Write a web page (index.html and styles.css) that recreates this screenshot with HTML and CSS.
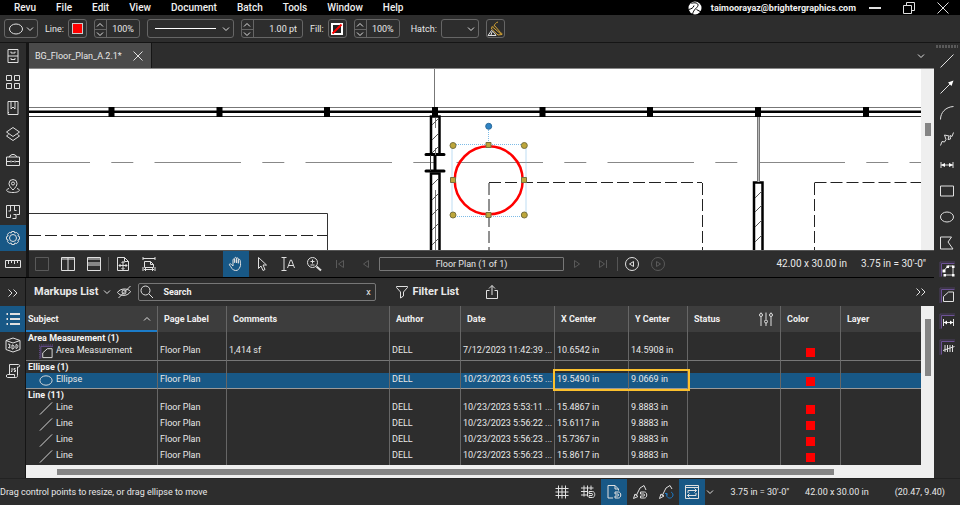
FILE: index.html
```
<!DOCTYPE html>
<html lang="en">
<head>
    <meta charset="UTF-8">
    <meta name="viewport" content="width=device-width, initial-scale=1.0">
    <title>BG_Floor_Plan_A.2.1 - Revu</title>
    <link rel="stylesheet" href="styles.css">
</head>
<body>
    <svg class="sprite" aria-hidden="true">
        <symbol id="chevron" viewBox="0 0 8 8"><path d="M1 2.500l3 3 3-3"/></symbol>
        <symbol id="chevron-up" viewBox="0 0 8 8"><path d="M1 5.500l3-3 3 3"/></symbol>
        <symbol id="double" viewBox="0 0 16 16"><path d="M3.500 4.500L7 8l-3.500 3.500M8.500 4.500L12 8l-3.500 3.500"/></symbol>
        <symbol id="line" viewBox="0 0 16 16"><path d="M1.500 14.500l13-13"/></symbol>
        <symbol id="ellipse" viewBox="0 0 16 16"><ellipse cx="8" cy="8" rx="6.500" ry="5"/></symbol>
        <symbol id="ruler" viewBox="0 0 16 16"><path class="ruler" d="M2.500 15.500v-13h13"/><path class="ruler ticks" d="M1 15.500V1h14.500"/></symbol>
        <symbol id="area" viewBox="0 0 16 16"><path d="M4.500 14.500v-5l5-4.500h5v9.500z"/></symbol>
    </svg>

    <header class="menubar">
        <nav class="menu">
            <a href="#">Revu</a>
            <a href="#">File</a>
            <a href="#">Edit</a>
            <a href="#">View</a>
            <a href="#">Document</a>
            <a href="#">Batch</a>
            <a href="#">Tools</a>
            <a href="#">Window</a>
            <a href="#">Help</a>
        </nav>
        <div class="account">
            <svg class="logo" viewBox="0 0 14 14"><circle cx="7" cy="7" r="6.500"/><path d="M3.500 2.500C6.500 1 10.500 2 10 4.500S5.500 8 4.500 13.500M6 4.500C5.500 7 3 8 .5 8.500M8.500 8.500l4.500 2.500"/></svg>
            <a href="#">taimoorayaz@brightergraphics.com</a>
        </div>
        <div class="window-buttons">
            <button aria-label="Minimize"><svg class="icon" viewBox="0 0 16 16"><path class="heavy" d="M2 8h12"/></svg></button>
            <button aria-label="Restore"><svg class="icon" viewBox="0 0 16 16"><path d="M2.500 5.500h8v8h-8zM5.500 5.500v-3h8v8h-3"/></svg></button>
            <button aria-label="Close"><svg class="icon" viewBox="0 0 16 16"><path d="M2.500 2.500l11 11M13.500 2.500l-11 11"/></svg></button>
        </div>
    </header>

    <div class="properties">
        <div class="picker shape">
            <select aria-label="Shape"><option></option></select>
            <svg class="icon" viewBox="0 0 16 16"><use href="#ellipse"/></svg>
            <svg class="chevron"><use href="#chevron"/></svg>
        </div>
        <label for="lineColor">Line:</label>
        <button class="swatch" id="lineColor"><span class="red"></span></button>
        <div class="spinner">
            <div class="steps">
                <button aria-label="More"><svg class="chevron"><use href="#chevron-up"/></svg></button>
                <button aria-label="Less"><svg class="chevron"><use href="#chevron"/></svg></button>
            </div>
            <input type="text" aria-label="Line opacity" value="100%">
        </div>
        <div class="picker line-style">
            <select aria-label="Line style"><option></option></select>
            <span class="stroke"></span>
            <svg class="chevron"><use href="#chevron"/></svg>
        </div>
        <div class="spinner wide">
            <div class="steps">
                <button aria-label="More"><svg class="chevron"><use href="#chevron-up"/></svg></button>
                <button aria-label="Less"><svg class="chevron"><use href="#chevron"/></svg></button>
            </div>
            <input type="text" aria-label="Line width" value="1.00 pt">
        </div>
        <label for="fillColor">Fill:</label>
        <button class="swatch" id="fillColor"><svg viewBox="0 0 12 12"><path class="frame" d="M1 1h10v10H1z"/><path class="slash" d="M1.500 10.500l9-9"/></svg></button>
        <div class="spinner">
            <div class="steps">
                <button aria-label="More"><svg class="chevron"><use href="#chevron-up"/></svg></button>
                <button aria-label="Less"><svg class="chevron"><use href="#chevron"/></svg></button>
            </div>
            <input type="text" aria-label="Fill opacity" value="100%">
        </div>
        <label class="hatch-label" for="hatch">Hatch:</label>
        <div class="picker hatch">
            <select id="hatch"><option></option></select>
            <svg class="chevron"><use href="#chevron"/></svg>
        </div>
        <button class="swatch" aria-label="Format painter"><svg class="icon" viewBox="0 0 16 16"><path class="gold" d="M11 1C9 1.500 7.500 3 7 5.500M5 5.500l9.500 8M7.500 4.500l6 7 2 1.500M5 5.500l-.5 2.500 6.500 6 4-.5"/><path d="M4.500 9.500l-3.500 5h8l-2-3zM4 14l1-3"/></svg></button>
    </div>

    <div class="workspace">
        <main class="center">
            <div class="upper">
                <nav class="rail">
                    <button aria-label="File access"><svg class="icon" viewBox="0 0 16 16"><path d="M3 1.500h10v13H3zM3 8h10M6 3.500V5h4V3.500M6 10v1.500h4V10"/></svg></button>
                    <button aria-label="Thumbnails"><svg class="icon" viewBox="0 0 16 16"><path d="M1.500 1.500h5v5h-5zM9.500 1.500h5v5h-5zM1.500 9.500h5v5h-5zM9.500 9.500h5v5h-5z"/></svg></button>
                    <button aria-label="Bookmarks"><svg class="icon" viewBox="0 0 16 16"><path d="M3 1.500h10v13H3zM6 1.500v7.500l2-2 2 2V1.500M3 12.500h1"/></svg></button>
                    <button aria-label="Layers"><svg class="icon" viewBox="0 0 16 16"><path d="M8 1.500L14.500 6 8 10.500 1.500 6zM3.500 8.500l-2 1.500L8 14.500l6.500-4.500-2-1.500"/></svg></button>
                    <button aria-label="Tool chest"><svg class="icon" viewBox="0 0 16 16"><path d="M1.500 5h13v8.500h-13zM1.500 9.500h4m1.500 0h2m1.500 0h4M4.500 5V4L7 2.500h2L11.500 4v1M6 8.500v2m4-2v2"/></svg></button>
                    <button aria-label="Places"><svg class="icon" viewBox="0 0 16 16"><path d="M8 12C5.500 9.500 4 7.500 4 5.500a4 4 0 0 1 8 0C12 7.500 10.500 9.500 8 12zM4 10.500c-4 1-3 4 4 4s8-3 4-4"/><circle cx="8" cy="5.500" r="1.500"/></svg></button>
                    <button aria-label="Spaces"><svg class="icon" viewBox="0 0 16 16"><path d="M1.500 1.500h13v9h-3M1.500 1.500v12h4v-3M7.500 14.500H11v-4H8.500M5.500 1.500V7h-2M9.500 1.500v5h2"/></svg></button>
                    <button class="active" aria-label="Properties"><svg class="icon" viewBox="0 0 16 16"><circle cx="8" cy="8" r="3.500"/><path d="M6.700 1.500h2.600l.5 1.500 1.800-.6 1.900 1.900-.6 1.700 1.600.7v2.600l-1.600.7.6 1.700-1.900 1.900-1.800-.6-.5 1.500H6.700L6.200 13l-1.800.6-1.900-1.900.6-1.700-1.600-.7V6.700L3.100 6l-.6-1.700 1.900-1.900 1.800.6z"/></svg></button>
                    <button aria-label="Measurements"><svg class="icon" viewBox="0 0 16 16"><path d="M.5 4.500h15v7H.5zM3.500 4.500V8m3-3.500v2.500m3-2.500V8m3-3.500v2.500"/></svg></button>
                </nav>
                <section class="document">
                    <div class="tabs">
                        <div class="tab">
                            <span>BG_Floor_Plan_A.2.1*</span>
                            <button aria-label="Close tab"><svg class="icon" viewBox="0 0 16 16"><path d="M3.500 3.500l9 9M12.500 3.500l-9 9"/></svg></button>
                        </div>
                        <button aria-label="All tabs"><svg class="chevron"><use href="#chevron"/></svg></button>
                    </div>
                    <div class="sheet">
                        <svg class="plan" viewBox="29 69 892 181" preserveAspectRatio="xMinYMin slice">
                            <!-- outer wall -->
                            <path class="thin" d="M434.500 69v38M29 107.500h892"/>
                            <path class="wall" d="M29 111.700h892"/>
                            <path class="dark" d="M29 116.500h892"/>
                            <path class="solid" d="M108.500 107h6v10h-6zM216.500 107h6v10h-6zM324 107h6v10h-6zM432 107h6v10h-6zM539.500 107h6v10h-6zM647 107h6v10h-6zM755 107h6v10h-6zM863 107h6v10h-6z"/>
                            <path class="axis" d="M3.500 162.500h918"/>
                            <!-- left room -->
                            <path class="dark" d="M29 213.500h298.500V250"/>
                            <path class="hidden-line" d="M29 235.500h298"/>
                            <!-- columns -->
                            <path class="column" d="M431 154v-37.500h8.500V154M431 251v-77.500h8.500V251M754 251v-68.500h8.500V251"/>
                            <path class="beam" d="M426 154.500h18M426 171h18"/>
                            <path class="web" d="M435 155v16"/>
                            <path class="dark" d="M430.500 155v16"/>
                            <path class="thin" d="M435.500 118v10m0 20v7m0 35v60M757.500 117v65M759.500 117v65"/>
                            <path class="fill-line" d="M758.500 117v65"/>
                            <path class="hatching" d="M432 125l6-6M432 140l6-6M432 153l6-6M432 185l6-6M432 200l6-6M432 215l6-6M432 230l6-6M432 245l6-6M755 198l7-7M755 212l7-7M755 227l7-7M755 242l7-7"/>
                            <path class="hidden-line" d="M489 182.500h213M489 183v67M702.500 183v67M814.500 182.500H921M814.500 183v67"/>
                            <!-- selected ellipse with its handles -->
                            <path class="bounds" d="M452 144.500h74v72h-74zM488.500 130v14"/>
                            <circle class="markup" cx="488.700" cy="180.300" r="34"/>
                            <path class="handle" d="M486 142.500h5v5h-5zM450.500 177.500h5v5h-5zM521.500 177.500h5v5h-5zM486 212.500h5v5h-5z"/>
                            <circle class="handle" cx="453" cy="145.500" r="3"/>
                            <circle class="handle" cx="524.300" cy="145.500" r="3"/>
                            <circle class="handle" cx="453" cy="215" r="3"/>
                            <circle class="handle" cx="524.300" cy="215" r="3"/>
                            <circle class="rotate" cx="488.700" cy="126.300" r="3"/>
                        </svg>
                        <div class="vscroll"><div class="thumb"></div></div>
                    </div>
                    <div class="navbar">
                        <button class="dim" aria-label="Unsplit"><svg class="icon" viewBox="0 0 16 16"><path d="M1.500 1.500h13v13h-13z"/></svg></button>
                        <button aria-label="Split vertical"><svg class="icon" viewBox="0 0 16 16"><path d="M1.500 1.500h13v13h-13zM8 1.500v13M1.500 3h13"/></svg></button>
                        <button aria-label="Split horizontal"><svg class="icon" viewBox="0 0 16 16"><path d="M1.500 1.500h13v13h-13zM1.500 7h13M1.500 9h13M1.500 3h13"/></svg></button>
                        <span class="sep"></span>
                        <button aria-label="Fit page"><svg class="icon" viewBox="0 0 16 16"><path d="M2.500 1.500h7l4 4v9h-11zM9.500 1.500v4h4M8 5.500v8M4 9.500h8M6.500 7L8 5.500 9.500 7M6.500 12L8 13.500 9.500 12M5.500 8L4 9.500 5.500 11M10.500 8L12 9.500 10.500 11"/></svg></button>
                        <button aria-label="Fit width"><svg class="icon" viewBox="0 0 16 16"><path d="M2 1v3M14 1v3M2 2.500h12M3.500 5.500h6l3 3v3h-9zM9.500 5.500v3h3M2 11v4M14 11v4M3 13.500h10M5 12l-1.500 1.500L5 15M11 12l1.500 1.500L11 15"/></svg></button>
                        <button class="active pan" aria-label="Pan"><svg class="icon" viewBox="0 0 16 16"><path d="M5 10V4c0-1.500 1.700-1.500 1.700 0v3M6.700 6V2.500c0-1.500 1.800-1.500 1.800 0V7M8.500 6V3c0-1.500 1.800-1.500 1.800 0v4.500M10.300 7V4.500c0-1.500 1.900-1.500 1.900 0 0 2 1 4.500-.2 6.500s-1.500 3.500-4.500 3.500C4 14.500 3.500 11 1.500 9c-.5-1.500 1-1.500 2-.5L5 10"/></svg></button>
                        <button aria-label="Select"><svg class="icon" viewBox="0 0 16 16"><path d="M4.500 1.500v11l2.500-2.500 2 4.500 2-1-2-4.500h3.500z"/></svg></button>
                        <button aria-label="Select text"><svg class="icon" viewBox="0 0 16 16"><path d="M1.500 1.500h5M4 1.500v13M1.500 14.500h5M7.500 12l3-8h1l3 8M8.500 9.500h5"/></svg></button>
                        <button aria-label="Zoom"><svg class="icon" viewBox="0 0 16 16"><circle cx="6.500" cy="6.500" r="5"/><path class="heavy" d="M10.500 10.500l4.500 4"/><path d="M4.500 5.500h4M6.500 3.500v4M4.500 9h4"/></svg></button>
                        <button class="dim" aria-label="First page"><svg class="icon" viewBox="0 0 16 16"><path d="M4.500 4v8M11.500 4.500v7L6.500 8z"/></svg></button>
                        <button class="dim" aria-label="Previous page"><svg class="icon" viewBox="0 0 16 16"><path d="M10.500 4.500v7L5.500 8z"/></svg></button>
                        <input class="page" type="text" aria-label="Page" value="Floor Plan (1 of 1)">
                        <button class="dim" aria-label="Next page"><svg class="icon" viewBox="0 0 16 16"><path d="M5.500 4.500v7l5-3.500z"/></svg></button>
                        <button class="dim" aria-label="Last page"><svg class="icon" viewBox="0 0 16 16"><path d="M11.500 4v8M4.500 4.500v7l5-3.500z"/></svg></button>
                        <span class="sep"></span>
                        <button aria-label="Previous view"><svg class="icon" viewBox="0 0 16 16"><circle cx="8" cy="8" r="6.500"/><path d="M9.500 5.500v5L5.500 8z"/></svg></button>
                        <button class="dim" aria-label="Next view"><svg class="icon" viewBox="0 0 16 16"><circle cx="8" cy="8" r="6.500"/><path d="M6.500 5.500v5l4-2.500z"/></svg></button>
                        <div class="sizes">
                            <span>42.00 x 30.00 in</span>
                            <span>3.75 in = 30'-0"</span>
                        </div>
                    </div>
                </section>
            </div>

            <div class="lower">
                <nav class="rail">
                    <button aria-label="Collapse"><svg class="icon" viewBox="0 0 16 16"><use href="#double"/></svg></button>
                    <button class="active" aria-label="Markups"><svg class="icon" viewBox="0 0 16 16"><path class="heavy" d="M5 3h10M5 8h10M5 13h10M1.500 3H3M1.500 8H3M1.500 13H3"/></svg></button>
                    <button aria-label="3D model tree"><svg class="icon" viewBox="0 0 16 16"><path d="M8 1l7 2.500v9L8 15l-7-2.500v-9zM1 3.500L8 6l7-2.500M3 7l2 .5v1L4 9l1 .5v1.500l-2-.5M7 8v4h1c1.500-.5 1.500-3.500 0-4zM11 7.500v4c2 0 3-4 0-4z"/></svg></button>
                    <button aria-label="JavaScript"><svg class="icon" viewBox="0 0 16 16"><path d="M4.500 11V1.500h9c1.500 0 1.500 2.500 0 2.500h-1v8.500c0 2-1 2-2 2h-8c-1.500 0-1.500-3 0-3h7v1.500c0 1 .5 1.500 1 1.500M7 5v3.500H6M10.500 5.500H9V7h1.500v1.500H9"/></svg></button>
                </nav>
                <section class="panel">
                    <div class="panel-bar">
                        <button class="panel-title">Markups List <svg class="chevron"><use href="#chevron"/></svg></button>
                        <button aria-label="Hide markups"><svg class="icon" viewBox="0 0 16 16"><path d="M1.500 8.500C4 4 12 4 14.500 7.500 12 12.500 4 12.500 1.500 8.500zM2.500 14l12-12"/><circle cx="8" cy="8" r="2"/></svg></button>
                        <div class="search">
                            <svg class="icon" viewBox="0 0 16 16"><circle cx="6.500" cy="6.500" r="4.500"/><path d="M10 10l4 4"/></svg>
                            <input type="text" aria-label="Search" placeholder="Search">
                            <button aria-label="Clear">x</button>
                        </div>
                        <button class="filter"><svg class="icon" viewBox="0 0 16 16"><path d="M2.500 2.500h11v1L9.500 8v4l-3 2V8l-4-4.500z"/></svg>Filter List</button>
                        <button aria-label="Export"><svg class="icon" viewBox="0 0 16 16"><path d="M5.500 6.500h-3v8h11v-8h-3M8 11V1.500M5 4.500l3-3 3 3"/></svg></button>
                        <button class="more" aria-label="More"><svg class="icon" viewBox="0 0 16 16"><use href="#double"/></svg></button>
                    </div>
                    <div class="list">
                        <div class="table-wrap">
                            <table>
                                <colgroup>
                                    <col class="c-subject"><col class="c-page"><col class="c-comments"><col class="c-author"><col class="c-date">
                                    <col class="c-x"><col class="c-y"><col class="c-status"><col class="c-color"><col>
                                </colgroup>
                                <thead>
                                    <tr>
                                        <th class="sorted"><div class="th">Subject <svg class="chevron"><use href="#chevron-up"/></svg></div></th>
                                        <th>Page Label</th>
                                        <th>Comments</th>
                                        <th>Author</th>
                                        <th>Date</th>
                                        <th>X Center</th>
                                        <th>Y Center</th>
                                        <th><div class="th">Status <svg class="icon" viewBox="0 0 16 16"><path d="M3 1.500v1M3 6v9M8 1.500v7M8 12v3M13 1.500v1M13 6v9"/><circle cx="3" cy="4" r="1.500"/><circle cx="8" cy="10.500" r="1.500"/><circle cx="13" cy="4" r="1.500"/></svg></div></th>
                                        <th>Color</th>
                                        <th>Layer</th>
                                    </tr>
                                </thead>
                                <tbody>
                                    <tr class="group"><td>Area Measurement (1)</td><td></td><td></td><td></td><td></td><td></td><td></td><td></td><td></td><td></td></tr>
                                    <tr class="last">
                                        <td><div class="subject"><svg class="icon" viewBox="0 0 16 16"><use href="#ruler"/><use href="#area"/></svg>Area Measurement</div></td>
                                        <td>Floor Plan</td><td>1,414 sf</td><td>DELL</td><td>7/12/2023 11:42:39 ...</td><td>10.6542 in</td><td>14.5908 in</td><td></td><td><span class="red"></span></td><td></td>
                                    </tr>
                                    <tr class="group"><td>Ellipse (1)</td><td></td><td></td><td></td><td></td><td></td><td></td><td></td><td></td><td></td></tr>
                                    <tr class="selected">
                                        <td><div class="subject"><svg class="icon" viewBox="0 0 16 16"><use href="#ellipse"/></svg>Ellipse</div></td>
                                        <td>Floor Plan</td><td></td><td>DELL</td><td>10/23/2023 6:05:55 ...</td><td class="marked">19.5490 in<span class="callout"></span></td><td>9.0669 in</td><td></td><td><span class="red"></span></td><td></td>
                                    </tr>
                                    <tr class="group"><td>Line (11)</td><td></td><td></td><td></td><td></td><td></td><td></td><td></td><td></td><td></td></tr>
                                    <tr>
                                        <td><div class="subject"><svg class="icon" viewBox="0 0 16 16"><use href="#line"/></svg>Line</div></td>
                                        <td>Floor Plan</td><td></td><td>DELL</td><td>10/23/2023 5:53:11 ...</td><td>15.4867 in</td><td>9.8883 in</td><td></td><td><span class="red"></span></td><td></td>
                                    </tr>
                                    <tr>
                                        <td><div class="subject"><svg class="icon" viewBox="0 0 16 16"><use href="#line"/></svg>Line</div></td>
                                        <td>Floor Plan</td><td></td><td>DELL</td><td>10/23/2023 5:56:22 ...</td><td>15.6117 in</td><td>9.8883 in</td><td></td><td><span class="red"></span></td><td></td>
                                    </tr>
                                    <tr>
                                        <td><div class="subject"><svg class="icon" viewBox="0 0 16 16"><use href="#line"/></svg>Line</div></td>
                                        <td>Floor Plan</td><td></td><td>DELL</td><td>10/23/2023 5:56:23 ...</td><td>15.7367 in</td><td>9.8883 in</td><td></td><td><span class="red"></span></td><td></td>
                                    </tr>
                                    <tr>
                                        <td><div class="subject"><svg class="icon" viewBox="0 0 16 16"><use href="#line"/></svg>Line</div></td>
                                        <td>Floor Plan</td><td></td><td>DELL</td><td>10/23/2023 5:56:23 ...</td><td>15.8617 in</td><td>9.8883 in</td><td></td><td><span class="red"></span></td><td></td>
                                    </tr>
                                </tbody>
                            </table>
                        </div>
                        <div class="vscroll"><div class="thumb"></div></div>
                    </div>
                    <div class="hscroll"><div class="thumb"></div></div>
                </section>
            </div>
        </main>

        <aside class="tools">
            <div class="grip"></div>
            <button aria-label="Line"><svg class="icon" viewBox="0 0 16 16"><use href="#line"/></svg></button>
            <button aria-label="Arrow"><svg class="icon" viewBox="0 0 16 16"><path d="M1.500 14.500L11 5"/><path class="fill" d="M14.500 1.500l-2 5.500L9 3.500z"/></svg></button>
            <button aria-label="Arc"><svg class="icon" viewBox="0 0 16 16"><path d="M1.500 14.500c0-7 5-12.500 13-13"/></svg></button>
            <button aria-label="Polyline"><svg class="icon" viewBox="0 0 16 16"><path d="M1.500 14.500L3 10.500l2.500.5L7 8.500 5.500 4l4.500 1-1 3.500 2.500-.5-.5-3.500 2 1 1.500-4"/></svg></button>
            <button aria-label="Dimension"><svg class="icon" viewBox="0 0 16 16"><path d="M2 5v6M14 5v6M2 8h12"/><path class="fill" d="M2 8l4-2v4zM14 8l-4-2v4z"/></svg></button>
            <button aria-label="Rectangle"><svg class="icon" viewBox="0 0 16 16"><path d="M1.500 3h13v10h-13z"/></svg></button>
            <button aria-label="Ellipse"><svg class="icon" viewBox="0 0 16 16"><use href="#ellipse"/></svg></button>
            <button aria-label="Polygon"><svg class="icon" viewBox="0 0 16 16"><path d="M1.500 2h11L9 7l5 7H1.500z"/></svg></button>
            <button aria-label="Polylength"><svg class="icon" viewBox="0 0 16 16"><use href="#ruler"/><path d="M5 9.500L9 5h5v9H6"/><path class="fill" d="M3.500 8.500h3v3h-3zM7.500 4.500h2.500v2.500H7.500zM13 4.500h2.500v2.500H13zM13 13h2.500v2.500H13zM4.500 13H7v2.500H4.500z"/></svg></button>
            <button aria-label="Area"><svg class="icon" viewBox="0 0 16 16"><use href="#ruler"/><use href="#area"/></svg></button>
            <button aria-label="Length"><svg class="icon" viewBox="0 0 16 16"><use href="#ruler"/><path d="M4.500 6v7M14.500 6v7M5 9.500h9"/><path class="fill" d="M5 9.500l3-2v4zM14 9.500l-3-2v4z"/></svg></button>
            <button aria-label="Count"><svg class="icon" viewBox="0 0 16 16"><use href="#ruler"/><path d="M6 6v7M8.500 6v7M11 6v7M13.500 6v7M4 11.500l11.500-4"/></svg></button>
        </aside>
    </div>

    <footer class="statusbar">
        <span>Drag control points to resize, or drag ellipse to move</span>
        <div class="snaps">
            <button aria-label="Grid"><svg class="icon" viewBox="0 0 16 16"><path d="M4.500 1.500v13M8 1.500v13M11.500 1.500v13M1.500 4.500h13M1.500 8h13M1.500 11.500h13"/></svg></button>
            <button aria-label="Snap to grid"><svg class="icon" viewBox="0 0 16 16"><path d="M4 1.500v11M7.500 1.500v11M11 1.500V6M1 4h12.500M1 7.500h7M1 11h6M9 7.500h3.500c3 0 3 6 0 6H9v-2h3c.8 0 .8-2 0-2H9z"/></svg></button>
            <button class="active" aria-label="Snap to content"><svg class="icon" viewBox="0 0 16 16"><path d="M7 14H2V1.500h7L12.500 5v1.500M9 1.500V5h3M9 8h3.500c3 0 3 6 0 6H9v-2h3c.8 0 .8-2 0-2H9z"/></svg></button>
            <button aria-label="Snap to markup"><svg class="icon" viewBox="0 0 16 16"><path d="M4 12l4-8 4-2.500L14 6M3 10l-1.500 4.500 4.500-2zM8.500 8h4c3 0 3 6 0 6h-4v-2H12c.8 0 .8-2 0-2H8.500z"/></svg></button>
            <button aria-label="Reuse"><svg class="icon" viewBox="0 0 16 16"><path d="M4 12l4-8 4-2.500L14 5M3 10l-1.500 4.500L6 12z"/><path class="blue" d="M9 9.500c-2 5 5.500 6.500 6 1.500M13 8c1 .5 2 1.500 2 3M9 9.500H7M9 9.500v2"/></svg></button>
            <button class="active" aria-label="Sync"><svg class="icon" viewBox="0 0 16 16"><path d="M1.500 1.500h13v13h-13zM1.500 3.500h13M4 9V6.500h8.500M10.500 4.500l2 2-2 2M12 9v2.500H3.500M5.500 9.500l-2 2 2 2"/></svg></button>
            <button class="small" aria-label="Sync options"><svg class="chevron"><use href="#chevron"/></svg></button>
        </div>
        <span class="scale">3.75 in = 30'-0"</span>
        <span class="size">42.00 x 30.00 in</span>
        <span>(20.47, 9.40)</span>
    </footer>
</body>
</html>
```

FILE: styles.css
```
* {
    box-sizing: border-box;
}
body {
    display: flex;
    flex-direction: column;
    height: 100vh;
    margin: 0;
    overflow: hidden;
    background-color: #2d2d2d;
    color: #e8e8e8;
    font-family: Roboto, sans-serif;
    font-size: 9px;
    line-height: 12px;
}
button,
input,
select {
    margin: 0;
    padding: 0;
    border: none;
    border-radius: 0;
    background: none;
    color: inherit;
    font: inherit;
    outline: none;
}
button {
    display: flex;
    flex: none;
    align-items: center;
    justify-content: center;
    width: 26px;
    height: 26px;
}
a {
    color: inherit;
    text-decoration: none;
}
svg {
    display: block;
    flex: none;
    fill: none;
    stroke: #e0e0e0;
    stroke-width: 1;
}
.sprite {
    position: absolute;
    width: 0;
    height: 0;
}
.icon {
    width: 16px;
    height: 16px;
}
.chevron {
    width: 8px;
    height: 8px;
}
.heavy {
    stroke-width: 2;
}
.fill {
    fill: #fff;
    stroke: none;
}
.ruler {
    stroke: #6d5296;
}
.ticks {
    stroke-dasharray: 1 1;
}
.gold {
    stroke: #d3a233;
}
.blue {
    stroke: #1c7cc9;
}
.active {
    background-color: #185886;
}
.dim svg {
    stroke: #5a5a5a;
}
.red {
    display: block;
    width: 9px;
    height: 9px;
    background-color: #f00;
}

/* menu */
.menubar {
    display: flex;
    flex: none;
    align-items: center;
    height: 15px;
    padding-left: 14px;
    background-color: #000;
    color: #f0f0f0;
}
.menu {
    display: flex;
    gap: 20px;
    font-size: 10px;
    font-weight: 500;
}
.account {
    display: flex;
    align-items: center;
    gap: 9px;
    margin-left: auto;
    font-weight: 700;
}
.logo {
    width: 14px;
    height: 14px;
    fill: #fff;
    stroke: none;
}
.logo path {
    fill: none;
    stroke: #000;
    stroke-width: 1;
}
.window-buttons {
    display: flex;
    gap: 8px;
    margin-left: 6px;
    padding-right: 4px;
}
.window-buttons button {
    height: 15px;
}

/* markup properties */
.properties {
    display: flex;
    flex: none;
    align-items: center;
    gap: 7px;
    height: 28px;
    padding-left: 4px;
    border-bottom: 1px solid #151515;
}
.properties label {
    margin-right: -3px;
}
.properties .hatch-label {
    margin-left: 4px;
}
.picker,
.swatch,
.spinner {
    display: flex;
    flex: none;
    align-items: center;
    height: 19px;
    border: 1px solid #666;
    border-radius: 3px;
}
.picker {
    position: relative;
    justify-content: space-between;
    padding: 0 3px;
}
.picker select {
    position: absolute;
    inset: 0;
    width: 100%;
    appearance: none;
}
.shape {
    width: 34px;
}
.line-style {
    width: 87px;
    padding-left: 7px;
}
.stroke {
    width: 61px;
    height: 1px;
    background-color: #fff;
}
.hatch {
    justify-content: flex-end;
    width: 38px;
}
.swatch {
    width: 19px;
}
.swatch .red {
    width: 11px;
    height: 11px;
    border: 1px solid #ccc;
}
.swatch svg {
    width: 12px;
    height: 12px;
}
.swatch .icon {
    width: 16px;
    height: 16px;
}
.frame {
    fill: #222;
    stroke: #fff;
    stroke-width: 2;
}
.slash {
    stroke: #f00;
    stroke-width: 2;
}
.spinner {
    width: 46px;
}
.wide {
    width: 62px;
}
.steps {
    flex: none;
    width: 12px;
    border-right: 1px solid #666;
}
.steps button {
    width: 11px;
    height: 9px;
}
.steps button + button {
    height: 8px;
    border-top: 1px solid #666;
}
.spinner input {
    width: 100%;
    min-width: 0;
    padding-right: 5px;
    text-align: right;
}

/* layout */
.workspace {
    display: flex;
    flex: 1;
    min-height: 0;
}
.center {
    display: flex;
    flex: 1;
    flex-direction: column;
    min-width: 0;
}
.upper {
    display: flex;
    flex: 1;
    min-height: 0;
    border-bottom: 1px solid #000;
}
.lower {
    display: flex;
    flex: none;
}
.rail {
    flex: none;
    width: 26px;
    overflow: hidden;
    border-right: 1px solid #151515;
}
.upper .rail {
    width: 29px;
    border-right: 3px solid #151515;
}
.lower .rail {
    padding-top: 2px;
}
.document,
.panel {
    display: flex;
    flex: 1;
    flex-direction: column;
    min-width: 0;
}
.tabs {
    display: flex;
    flex: none;
    justify-content: space-between;
    height: 26px;
    border-bottom: 1px solid #888;
}
.tab {
    display: flex;
    align-items: center;
    gap: 3px;
    padding-left: 6px;
    border-right: 1px solid #151515;
    background-color: #4a4a4a;
}
.sheet {
    display: flex;
    flex: 1;
    min-height: 0;
}
.vscroll {
    flex: none;
    width: 13px;
    background-color: #efefef;
}
.vscroll .thumb {
    width: 6px;
    height: 13px;
    margin: 54px auto 0;
    background-color: #858585;
}

/* floor plan */
.plan {
    flex: 1;
    min-width: 0;
    height: 100%;
    background-color: #fff;
    stroke: #000;
}
.thin {
    stroke: #777;
}
.dark {
    stroke: #333;
}
.wall,
.column {
    stroke-width: 2.500;
}
.solid {
    fill: #000;
    stroke: none;
}
.axis {
    stroke: #888;
    stroke-dasharray: 86.500 21.300 22 21.200;
}
.hidden-line {
    stroke: #222;
    stroke-dasharray: 12 4;
}
.beam {
    stroke-width: 3;
    stroke-linecap: round;
}
.web {
    stroke-width: 3;
}
.fill-line {
    stroke: #bbb;
}
.hatching {
    stroke: #555;
}
.bounds {
    stroke: #7dbbe6;
    stroke-dasharray: 1 1;
}
.markup {
    stroke: #f00;
    stroke-width: 2.500;
}
.handle {
    fill: #bda63a;
    stroke: #77713f;
}
.rotate {
    fill: #2f83c4;
    stroke: #2a6a9b;
}

/* page navigation */
.navbar {
    display: flex;
    flex: none;
    align-items: center;
    height: 27px;
    border-top: 1px solid #555;
}
.sep {
    flex: none;
    width: 1px;
    height: 14px;
    margin: 0 1px;
    background-color: #555;
}
.pan {
    margin-left: 61px;
}
.page {
    flex: none;
    width: 185px;
    height: 14px;
    border: 1px solid #777;
    border-radius: 1px;
    text-align: center;
}
.sizes {
    display: flex;
    gap: 14px;
    margin-left: auto;
    padding-right: 8px;
    font-size: 10px;
}

/* markups list */
.panel-bar {
    display: flex;
    flex: none;
    align-items: center;
    height: 28px;
    padding-left: 8px;
    font-size: 11px;
    font-weight: 700;
}
.panel-title {
    gap: 5px;
    width: auto;
}
.search {
    display: flex;
    flex: none;
    align-items: center;
    width: 238px;
    height: 18px;
    margin-left: 1px;
    border: 1px solid #777;
    border-radius: 2px;
}
.search input {
    flex: 1;
    min-width: 0;
    padding-left: 8px;
    font-size: 9px;
}
.search input::placeholder {
    color: #f0f0f0;
    opacity: 1;
}
.search button {
    width: 14px;
    height: 16px;
    font-size: 9px;
    font-weight: 400;
}
.filter {
    gap: 2px;
    width: auto;
    margin: 0 20px 0 18px;
}
.more {
    margin-left: auto;
}
.list {
    display: flex;
    flex: none;
}
.table-wrap {
    flex: 1;
    min-width: 0;
}
table {
    width: 100%;
    border-collapse: separate;
    border-spacing: 0;
    table-layout: fixed;
}
.c-subject { width: 132px; }
.c-page { width: 69px; }
.c-comments { width: 163px; }
.c-author { width: 71px; }
.c-date { width: 94px; }
.c-x { width: 74px; }
.c-y { width: 59px; }
.c-status { width: 93px; }
.c-color { width: 60px; }
th,
td {
    padding: 0 0 0 2px;
    border-right: 1px solid #666;
    text-align: left;
    white-space: nowrap;
}
th:last-child,
td:last-child {
    border-right: none;
}
th {
    height: 26px;
    padding-left: 6px;
    background-color: #3d3d3d;
    color: #f0f0f0;
    font-weight: 700;
}
.sorted {
    padding-left: 2px;
    box-shadow: inset 0 -2px #1c7cc9;
}
.th {
    display: flex;
    align-items: center;
    justify-content: space-between;
    padding-right: 6px;
}
td {
    height: 16px;
    line-height: 13px;
    vertical-align: top;
}
.group td {
    height: 12px;
    padding-top: 1px;
    color: #f4f4f4;
    font-weight: 700;
    line-height: 11px;
}
.last td {
    height: 17px;
    border-bottom: 1px solid #777;
}
.selected td {
    background-color: #185886;
    border-bottom: 1px solid #999;
}
.subject {
    display: flex;
    height: 15px;
    padding-left: 10px;
    gap: 2px;
}
.subject .icon {
    height: 15px;
}
td .red {
    margin: 4px 0 0 23px;
}
.marked {
    position: relative;
}
.callout {
    position: absolute;
    top: -4px;
    left: -2px;
    z-index: 1;
    width: 137px;
    height: 22px;
    border: 2px solid #fbc02d;
}
.list .thumb {
    height: 57px;
    margin-top: 13px;
}
.hscroll {
    flex: none;
    height: 13px;
    padding: 4px 100px 0 31px;
    background-color: #efefef;
}
.hscroll .thumb {
    height: 6px;
    background-color: #858585;
}

/* right toolbar */
.tools {
    flex: none;
    width: 26px;
    padding-top: 2px;
}
.grip {
    height: 3px;
    margin: 0 2px;
    background: repeating-linear-gradient(90deg, #5a5a5a 0 2px, transparent 2px 3px);
}

/* status bar */
.statusbar {
    display: flex;
    flex: none;
    align-items: center;
    height: 27px;
    padding-right: 15px;
    border-top: 1px solid #222;
}
.snaps {
    display: flex;
    margin-left: auto;
}
.small {
    width: 10px;
}
.scale {
    margin: 0 16px;
}
.size {
    margin-right: 26px;
}
```
